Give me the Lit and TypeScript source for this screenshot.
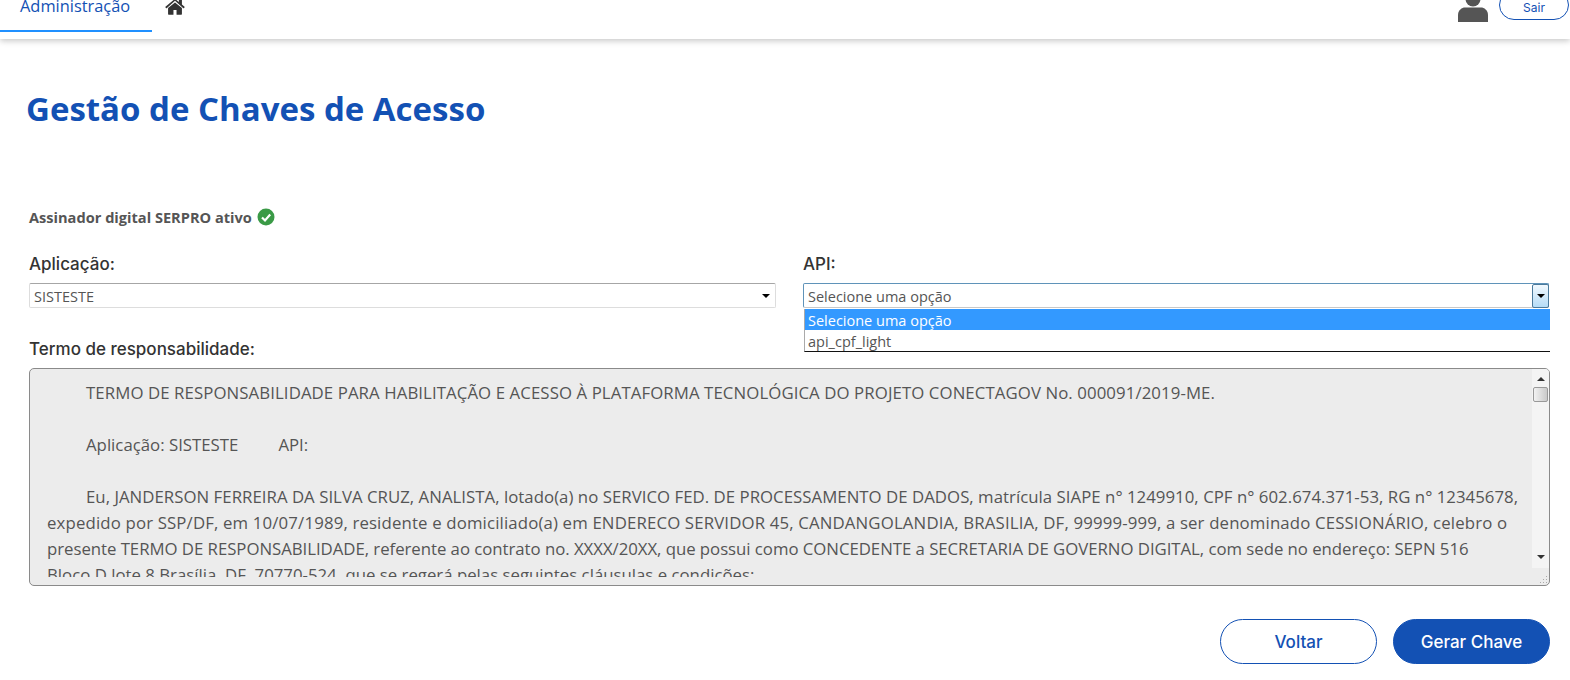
import { LitElement, html, css } from "lit";
import { customElement } from "lit/decorators.js";

@customElement("app-root")
export class AppRoot extends LitElement {
  static styles = css`
    :host { display: block; background: #fff; height: 680px; overflow: hidden; font-family: "Open Sans", "Noto Sans", sans-serif; color: #555; }
    * { box-sizing: border-box; }
    .top { height: 39px; display: flex; align-items: flex-start; background: #fff; box-shadow: 0 2px 6px rgba(0,0,0,.22); overflow: hidden; position: relative; }
    .tab { width: 152px; height: 32px; border-bottom: 2px solid #2090ff; color: #1351b4; font-size: 16.4px; line-height: 12px; padding-left: 20px; white-space: nowrap; font-weight: 400; }
    .home { margin: -3px 0 0 13px; width: 20px; height: 20px; display: block; }
    .spacer { flex: 1; }
    .person { display: block; width: 30px; height: 30px; margin: -8px 11px 0 0; }
    .sair { width: 70px; height: 30px; margin: -10px 1px 0 0; border: 1px solid #1351b4; border-radius: 15px; background: #fff; color: #1351b4; font: 400 12px Inter, sans-serif; padding: 9px 0 0; text-align: center; }
    main { padding: 0 20px 0 29px; }
    h1 { margin: 45px 0 0 -3px; color: #1351b4; font-size: 33px; line-height: 50px; font-weight: 700; white-space: nowrap; }
    .status { margin-top: 73px; height: 20px; display: flex; align-items: center; gap: 5px; font-size: 14.6px; font-weight: 700; color: #555; white-space: nowrap; }
    .status svg { width: 18px; height: 18px; display: block; }
    .cols { display: grid; grid-template-columns: 747px 747px; column-gap: 27px; margin-top: 27px; }
    label { display: block; font: 500 17px/20px Inter, sans-serif; color: #333; margin: 0; }
    .sel { position: relative; margin-top: 9px; height: 25px; border: 1px solid #ddd; border-top-color: #a6a6a6; border-radius: 2px; display: flex; align-items: center; justify-content: space-between; padding: 1px 5px 0 4px; font-size: 14.500px; color: #555; background: #fff; }
    .sel .arrow { width: 0; height: 0; border-left: 4px solid transparent; border-right: 4px solid transparent; border-top: 4px solid #000; }
    .sel.open { border-color: #5f93b9; border-bottom-color: #c8c8c8; padding: 1px 0 0 4px; margin-right: 1px; }
    .btn-drop { width: 17px; height: 24px; margin-top: -1px; border: 1px solid #4b7a9c; border-radius: 2px; background: linear-gradient(#f2f9fe, #b5dcf7); display: flex; align-items: center; justify-content: center; margin-right: -1px; }
    .list { position: absolute; top: 25px; left: 0; right: -2px; background: #fff; border-left: 1px solid #aaa; border-bottom: 1px solid #111; z-index: 2; font-size: 14.500px; }
    .list div { height: 21px; line-height: 23px; padding-left: 3px; }
    .list .on { background: #3399ff; color: #fff; }
    .termo-label { margin-top: 31px; }
    .termo { margin-top: 9px; height: 218px; border: 1px solid #8a8a8a; border-radius: 5px; background: #ececec; display: flex; overflow: hidden; }
    .txt { flex: 1; margin-bottom: 8px; padding: 11px 0 0 17px; font-size: 16.800px; line-height: 26px; color: #555; overflow: hidden; white-space: nowrap; }
    .txt p { margin: 0; height: 26px; }
    .ind { padding-left: 39px; }
    .ls-a { letter-spacing: .09px; }
    .ls-b { letter-spacing: .03px; }
    .ls-c { letter-spacing: .15px; }
    .ls-d { letter-spacing: -.04px; }
    .gap { height: 26px; }
    .api { margin-left: 40px; }
    .bar { width: 17px; display: flex; flex-direction: column; align-items: center; position: relative; }
    .track { height: 199px; width: 100%; background: #f4f4f4; display: flex; flex-direction: column; align-items: center; padding-top: 8px; }
    .up, .down { width: 0; height: 0; border-left: 4px solid transparent; border-right: 4px solid transparent; }
    .up { border-bottom: 4px solid #333; }
    .down { border-top: 4px solid #333; margin-bottom: 9px; }
    .thumb { width: 15px; height: 15px; margin-top: 6px; border: 1px solid #999; border-radius: 2px; background: linear-gradient(90deg, #f2f2f2, #c9c9c9); }
    .fill { flex: 1; }
    .grip { position: absolute; right: 1px; bottom: 1px; width: 10px; height: 10px; }
    .actions { display: flex; justify-content: flex-end; gap: 16px; margin-top: 33px; }
    .b { width: 157px; height: 45px; border-radius: 23px; border: 1px solid #1351b4; font: 500 17px Inter, sans-serif; display: flex; align-items: center; justify-content: center; }
    .b.out { background: #fff; color: #1351b4; }
    .b.fill-b { background: #1351b4; color: #fff; }
  `;

  render() {
    return html`
      <div class="top">
        <div class="tab">Administração</div>
        <svg class="home" viewBox="0 0 1664 1536"><path fill="#333" d="M1408 864v480q0 26-19 45t-45 19H960V1024H704v384H320q-26 0-45-19t-19-45V864q0-1 .5-3t.5-3l575-474 575 474q1 2 1 6zm223-69-62 74q-8 9-21 11h-3q-13 0-21-7L832 257 140 873q-12 8-24 7-13-2-21-11l-62-74q-8-10-7-23.500T37 750L756 151q32-26 76-26t76 26l244 204V160q0-14 9-23t23-9h192q14 0 23 9t9 23v408l219 182q10 8 11 21.500t-7 23.500z"/></svg>
        <div class="spacer"></div>
        <svg class="person" viewBox="0 0 30 30"><circle cx="15" cy="7" r="7.500" fill="#555"/><path fill="#555" d="M0 30V23c0-5 4-7.500 7-7.500h16c3 0 7 2.500 7 7.500v7z"/></svg>
        <div class="sair">Sair</div>
      </div>
      <main>
        <h1>Gestão de Chaves de Acesso</h1>
        <div class="status">Assinador digital SERPRO ativo
          <svg viewBox="0 0 18 18"><circle cx="9" cy="9" r="8.500" fill="#3a9a46"/><path d="M5 9.500l3 3 5.200-6" fill="none" stroke="#fff" stroke-width="2.200"/></svg>
        </div>
        <div class="cols">
          <div><label>Aplicação:</label><div class="sel">SISTESTE<span class="arrow"></span></div></div>
          <div><label>API:</label>
            <div class="sel open">Selecione uma opção<span class="btn-drop"><span class="arrow"></span></span>
              <div class="list"><div class="on">Selecione uma opção</div><div>api_cpf_light</div></div>
            </div>
          </div>
        </div>
        <label class="termo-label">Termo de responsabilidade:</label>
        <div class="termo">
          <div class="txt">
            <p class="ind ls-a">TERMO DE RESPONSABILIDADE PARA HABILITAÇÃO E ACESSO À PLATAFORMA TECNOLÓGICA DO PROJETO CONECTAGOV No. 000091/2019-ME.</p>
            <div class="gap"></div>
            <p class="ind">Aplicação: SISTESTE<span class="api">API:</span></p>
            <div class="gap"></div>
            <p class="ind ls-b">Eu, JANDERSON FERREIRA DA SILVA CRUZ, ANALISTA, lotado(a) no SERVICO FED. DE PROCESSAMENTO DE DADOS, matrícula SIAPE n° 1249910, CPF n° 602.674.371-53, RG n° 12345678,</p>
            <p class="ls-c">expedido por SSP/DF, em 10/07/1989, residente e domiciliado(a) em ENDERECO SERVIDOR 45, CANDANGOLANDIA, BRASILIA, DF, 99999-999, a ser denominado CESSIONÁRIO, celebro o</p>
            <p class="ls-d">presente TERMO DE RESPONSABILIDADE, referente ao contrato no. XXXX/20XX, que possui como CONCEDENTE a SECRETARIA DE GOVERNO DIGITAL, com sede no endereço: SEPN 516</p>
            <p>Bloco D lote 8 Brasília, DF, 70770-524, que se regerá pelas seguintes cláusulas e condições:</p>
          </div>
          <div class="bar">
            <div class="track"><span class="up"></span><span class="thumb"></span><span class="fill"></span><span class="down"></span></div>
            <svg class="grip" viewBox="0 0 10 10"><path fill="#aaa" d="M8 2h1v1H8zM5 5h1v1H5zM8 5h1v1H8zM2 8h1v1H2zM5 8h1v1H5zM8 8h1v1H8z"/></svg>
          </div>
        </div>
        <div class="actions"><div class="b out">Voltar</div><div class="b fill-b">Gerar Chave</div></div>
      </main>
    `;
  }
}
